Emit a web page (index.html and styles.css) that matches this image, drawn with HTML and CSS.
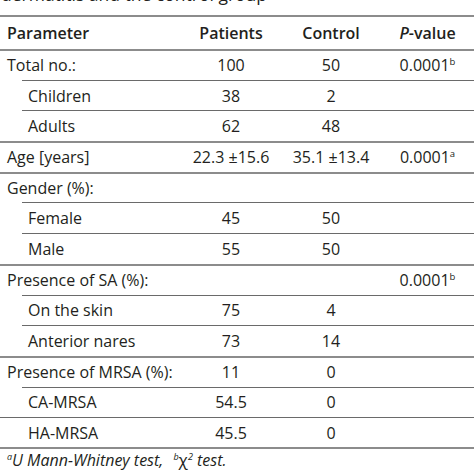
FILE: index.html
```html
<!DOCTYPE html>
<html>
<head>
<meta charset="utf-8">
<link rel="stylesheet" href="styles.css">
</head>
<body>
<div class="caption"><div class="caption-text">dermatitis and the control group</div></div>
<div class="table">
  <div class="row head">
    <div class="c1">Parameter</div><div class="c">Patients</div><div class="c">Control</div><div class="c"><i>P</i>-value</div>
  </div>
  <div class="row"><div class="c1">Total no.:</div><div class="c">100</div><div class="c">50</div><div class="c">0.0001<sup>b</sup></div></div>
  <div class="row sub"><div class="c1">Children</div><div class="c">38</div><div class="c">2</div><div class="c"></div></div>
  <div class="row sub"><div class="c1">Adults</div><div class="c">62</div><div class="c">48</div><div class="c"></div></div>
  <div class="row"><div class="c1">Age [years]</div><div class="c">22.3 ±15.6</div><div class="c">35.1 ±13.4</div><div class="c">0.0001<sup>a</sup></div></div>
  <div class="row"><div class="c1">Gender (%):</div><div class="c"></div><div class="c"></div><div class="c"></div></div>
  <div class="row sub"><div class="c1">Female</div><div class="c">45</div><div class="c">50</div><div class="c"></div></div>
  <div class="row sub"><div class="c1">Male</div><div class="c">55</div><div class="c">50</div><div class="c"></div></div>
  <div class="row"><div class="c1">Presence of SA (%):</div><div class="c"></div><div class="c"></div><div class="c">0.0001<sup>b</sup></div></div>
  <div class="row sub"><div class="c1">On the skin</div><div class="c">75</div><div class="c">4</div><div class="c"></div></div>
  <div class="row sub"><div class="c1">Anterior nares</div><div class="c">73</div><div class="c">14</div><div class="c"></div></div>
  <div class="row"><div class="c1">Presence of MRSA (%):</div><div class="c">11</div><div class="c">0</div><div class="c"></div></div>
  <div class="row sub"><div class="c1">CA-MRSA</div><div class="c">54.5</div><div class="c">0</div><div class="c"></div></div>
  <div class="row sub last"><div class="c1">HA-MRSA</div><div class="c">45.5</div><div class="c">0</div><div class="c"></div></div>
</div>
<div class="foot"><sup>a</sup>U Mann-Whitney test, <sup class="gap">b</sup><span class="chi">χ</span><sup>2</sup> test.</div>
</body>
</html>
```
FILE: styles.css
```css
html, body {
  margin: 0;
  padding: 0;
  background: #ffffff;
}
body {
  width: 474px;
  height: 472px;
  overflow: hidden;
  font-family: "Open Sans", Lato, sans-serif;
  color: #231f20;
}
.caption {
  height: 15px;
  overflow: hidden;
}
.caption-text {
  margin-top: -17px;
  font-size: 17.5px;
  line-height: 22px;
  padding-left: 1px;
}
.table {
  border-top: 2px solid #8c8c8c;
}
.row {
  display: grid;
  grid-template-columns: 1fr 100px 100px 93px;
  align-items: center;
  height: 30.7px;
  box-sizing: border-box;
  border-top: 2px solid #8c8c8c;
  font-size: 16px;
}
.row.head {
  border-top: none;
  height: 32px;
  font-weight: 600;
}
.row.sub {
  margin-left: 22px;
  border-top: 1px solid #6a6a6a;
}
.row.last {
  margin-left: 0;
  padding-left: 22px;
  border-bottom: 2px solid #8c8c8c;
  height: 32px;
}
.c1 {
  padding-left: 7px;
  white-space: nowrap;
}
.row.sub .c1 {
  padding-left: 6px;
}
.c {
  text-align: center;
  white-space: nowrap;
}
sup {
  font-size: 9.5px;
  line-height: 0;
  vertical-align: 6px;
}
.foot {
  font-style: italic;
  font-size: 16px;
  line-height: 20px;
  padding: 1px 0 0 7px;
  white-space: nowrap;
}
.foot sup {
  font-size: 9px;
}
.foot .gap {
  margin-left: 6px;
}
.foot .chi {
  font-style: normal;
  font-size: 17px;
  line-height: 0;
}
```
